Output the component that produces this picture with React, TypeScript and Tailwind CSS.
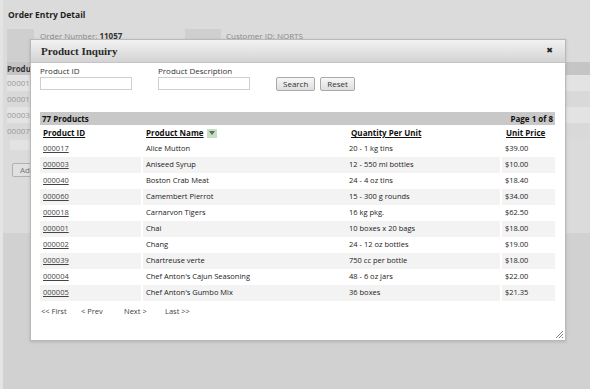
import React from 'react';

type Product = { id: string; name: string; qty: string; price: string };

const products: Product[] = [
  { id: '000017', name: 'Alice Mutton', qty: '20 - 1 kg tins', price: '$39.00' },
  { id: '000003', name: 'Aniseed Syrup', qty: '12 - 550 ml bottles', price: '$10.00' },
  { id: '000040', name: 'Boston Crab Meat', qty: '24 - 4 oz tins', price: '$18.40' },
  { id: '000060', name: 'Camembert Pierrot', qty: '15 - 300 g rounds', price: '$34.00' },
  { id: '000018', name: 'Carnarvon Tigers', qty: '16 kg pkg.', price: '$62.50' },
  { id: '000001', name: 'Chai', qty: '10 boxes x 20 bags', price: '$18.00' },
  { id: '000002', name: 'Chang', qty: '24 - 12 oz bottles', price: '$19.00' },
  { id: '000039', name: 'Chartreuse verte', qty: '750 cc per bottle', price: '$18.00' },
  { id: '000004', name: "Chef Anton's Cajun Seasoning", qty: '48 - 6 oz jars', price: '$22.00' },
  { id: '000005', name: "Chef Anton's Gumbo Mix", qty: '36 boxes', price: '$21.35' },
];

const font = { fontFamily: '"Open Sans", "Noto Sans", sans-serif' };

// the order page behind the dialog, dimmed by the overlay
const OrderPage: React.FC = () => {
  const rows = ['00001', '00001', '00003', '00007'];
  return (
    <div className="h-[233px] bg-[#dbdbdb] ml-[3px] pl-[4px] pt-[9px]">
      <h1 className="text-[8.5px] font-bold text-[#1e1e1e] pl-[1px] leading-[12px]">Order Entry Detail</h1>
      <div className="mt-[8px] flex h-[33px] text-[8px] text-[#8a8a8a]">
        <div className="w-[27px] bg-[#cfcfcf]" />
        <div className="w-[151px] pl-[6px] pt-[1px] leading-[12px]">
          Order Number: <span className="font-bold text-[#333]">11057</span>
        </div>
        <div className="w-[36px] bg-[#cfcfcf] h-[10px]" />
        <div className="pl-[5px] pt-[1px] leading-[12px]">Customer ID: NORTS</div>
      </div>
      <div className="h-[13px] bg-[#c5c5c5] text-[8px] font-bold text-[#333] leading-[13px]">Product</div>
      {rows.map((r, i) => (
        <div
          key={i}
          className={`h-[16px] leading-[16px] text-[8px] text-[#9a9a9a] ${i % 2 === 0 ? 'bg-[#e3e3e3]' : 'bg-[#d9d9d9]'}`}
        >
          {r}
        </div>
      ))}
      <div className="mt-[1px] ml-[3px] w-[30px] h-[10px] bg-[#e3e3e3]" />
      <div className="mt-[13px] ml-[5px] w-[30px] h-[14px] border border-[#b0b0b0] bg-[#e0e0e0] rounded-[2px] text-[8px] text-[#777] pl-[7px] leading-[12px]">
        Add
      </div>
    </div>
  );
};

const SortIcon: React.FC = () => (
  <span className="inline-flex items-center justify-center w-[10px] h-[9px] bg-[#c9dcc6] ml-[3px] align-middle">
    <svg width="6" height="4" viewBox="0 0 6 4">
      <path d="M0 0 L6 0 L3 4 Z" fill="#4a7a45" />
    </svg>
  </span>
);

const btn =
  'h-[14px] px-[6px] text-[8px] leading-[12px] text-[#333] border border-[#a9a9a9] rounded-[2px] bg-gradient-to-b from-[#f7f7f7] to-[#dedede]';

const ProductInquiry: React.FC = () => (
  <div className="absolute left-[30px] top-[39px] w-[536px] h-[302px] bg-white border border-[#b9b9b9] shadow-[0_1px_3px_rgba(0,0,0,0.15)]">
    <div className="h-[23px] flex items-center justify-between px-[10px] bg-gradient-to-b from-[#f2f2f2] to-[#d4d4d4] border-b border-[#c4c4c4]">
      <span
        className="text-[11px] font-bold text-[#2a2a2a]"
        style={{ fontFamily: '"Liberation Serif", "DejaVu Serif", serif' }}
      >
        Product Inquiry
      </span>
      <span
        className="text-[8px] text-[#222] leading-none mr-[2px]"
        style={{ fontFamily: '"DejaVu Sans", sans-serif' }}
      >
        ✖
      </span>
    </div>

    <div className="px-[9px]" style={font}>
      <div className="flex items-end pt-[2px]">
        <label className="flex flex-col w-[118px]">
          <span className="text-[8px] text-[#333] leading-[11px]">Product ID</span>
          <span className="mt-[1px] w-[92px] h-[13px] border border-[#cfcfcf] bg-white" />
        </label>
        <label className="flex flex-col w-[118px]">
          <span className="text-[8px] text-[#333] leading-[11px]">Product Description</span>
          <span className="mt-[1px] w-[92px] h-[13px] border border-[#cfcfcf] bg-white" />
        </label>
        <div className="flex gap-[5px] mb-[-1px]">
          <button className={btn}>Search</button>
          <button className={btn}>Reset</button>
        </div>
      </div>

      <div className="mt-[22px] w-[515px]">
        <div className="h-[13px] bg-[#c8c8c8] flex items-center justify-between px-[2px] text-[8px] font-bold text-[#111]">
          <span>77 Products</span>
          <span>Page 1 of 8</span>
        </div>
        <div className="flex h-[16px] items-center text-[8px] font-bold text-[#111]">
          <div className="w-[103px] pl-[3px]"><span className="underline">Product ID</span></div>
          <div className="w-[203px] pl-[3px] flex items-center">
            <span className="underline">Product Name</span>
            <SortIcon />
          </div>
          <div className="w-[156px] pl-[5px]"><span className="underline">Quantity Per Unit</span></div>
          <div className="w-[53px] pl-[4px]"><span className="underline">Unit Price</span></div>
        </div>
        {products.map((p, i) => (
          <div
            key={p.id}
            className={`flex h-[16px] items-center text-[7.5px] text-[#222] ${i % 2 === 1 ? 'bg-[#f3f3f3]' : 'bg-white'}`}
          >
            <div className="w-[103px] pl-[3px] h-full flex items-center border-r-2 border-white">
              <span className="underline text-[#444]">{p.id}</span>
            </div>
            <div className="w-[203px] pl-[3px] h-full flex items-center">{p.name}</div>
            <div className="w-[156px] pl-[3px] h-full flex items-center border-r-2 border-white">{p.qty}</div>
            <div className="w-[53px] pl-[3px] h-full flex items-center">{p.price}</div>
          </div>
        ))}
        <div className="flex mt-[5px] text-[7.5px] text-[#444] pl-[1px]">
          <span className="w-[40px]">&lt;&lt; First</span>
          <span className="w-[43px]">&lt; Prev</span>
          <span className="w-[41px]">Next &gt;</span>
          <span>Last &gt;&gt;</span>
        </div>
      </div>
    </div>

    <svg className="absolute right-[2px] bottom-[2px]" width="8" height="8" viewBox="0 0 8 8">
      <path d="M1 8 L8 1 M4 8 L8 4 M7 8 L8 7" stroke="#888" strokeWidth="1" />
    </svg>
  </div>
);

const App: React.FC = () => {
  return (
    <div className="relative w-[590px] h-[389px] overflow-hidden bg-[#d1d1d1]" style={font}>
      <div className="absolute left-0 top-0 bottom-0 w-[3px] bg-[#e4e4e4]" />
      <OrderPage />
      <ProductInquiry />
    </div>
  );
};

export default App;
